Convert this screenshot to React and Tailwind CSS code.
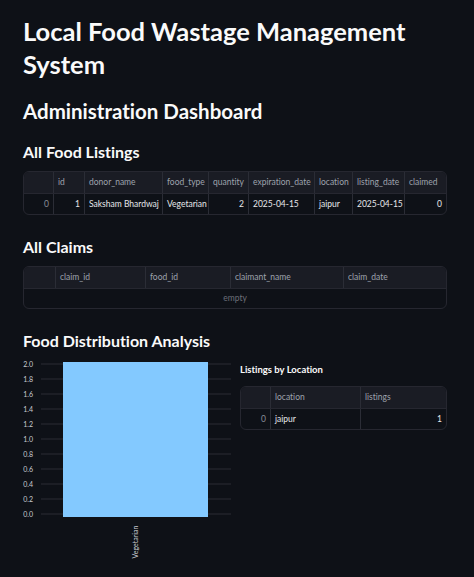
const listingCols = [
  { key: "idx", label: "", w: 30, align: "right" },
  { key: "id", label: "id", w: 31, align: "right" },
  { key: "donor_name", label: "donor_name", w: 78 },
  { key: "food_type", label: "food_type", w: 46 },
  { key: "quantity", label: "quantity", w: 40, align: "right" },
  { key: "expiration_date", label: "expiration_date", w: 66 },
  { key: "location", label: "location", w: 38 },
  { key: "listing_date", label: "listing_date", w: 52 },
  { key: "claimed", label: "claimed", w: 41, align: "right" },
];

const listingRows = [
  {
    idx: 0,
    id: 1,
    donor_name: "Saksham Bhardwaj",
    food_type: "Vegetarian",
    quantity: 2,
    expiration_date: "2025-04-15",
    location: "jaipur",
    listing_date: "2025-04-15",
    claimed: 0,
  },
];

const claimCols = [
  { key: "idx", label: "", w: 32 },
  { key: "claim_id", label: "claim_id", w: 90 },
  { key: "food_id", label: "food_id", w: 85 },
  { key: "claimant_name", label: "claimant_name", w: 113 },
  { key: "claim_date", label: "claim_date", w: 100 },
];

const locCols = [
  { key: "idx", label: "", w: 30, align: "right" },
  { key: "location", label: "location", w: 90 },
  { key: "listings", label: "listings", w: 85, align: "right" },
];

function DataTable({ cols, rows, empty }) {
  return (
    <div className="border border-[#262730] rounded-md overflow-hidden text-[8.5px]">
      <div className="flex bg-[#1a1c24] h-[21px] items-center text-[#9ea3ad]">
        {cols.map((c) => (
          <div
            key={c.key}
            style={{ width: c.w }}
            className="h-full flex items-center px-[4px] border-r border-[#2b2d36] last:border-r-0 shrink-0 whitespace-nowrap overflow-hidden"
          >
            {c.label}
          </div>
        ))}
      </div>
      {empty ? (
        <div className="h-[20px] flex items-center justify-center border-t border-[#262730] text-[#6b6f78]">
          empty
        </div>
      ) : (
        rows.map((r, i) => (
          <div key={i} className="flex h-[21px] items-center border-t border-[#262730] text-[#e6e7ea]">
            {cols.map((c) => (
              <div
                key={c.key}
                style={{ width: c.w }}
                className={
                  "h-full flex items-center px-[4px] border-r border-[#2b2d36] last:border-r-0 shrink-0 whitespace-nowrap overflow-hidden " +
                  (c.align === "right" ? "justify-end " : "") +
                  (c.key === "idx" ? "text-[#8a8e97]" : "")
                }
              >
                {r[c.key]}
              </div>
            ))}
          </div>
        ))
      )}
    </div>
  );
}

function BarChart() {
  const ticks = ["2.0", "1.8", "1.6", "1.4", "1.2", "1.0", "0.8", "0.6", "0.4", "0.2", "0.0"];
  return (
    <svg width="215" height="210" viewBox="0 0 215 210" className="block">
      {ticks.map((t, i) => {
        const y = 4 + i * 15;
        return (
          <g key={t}>
            <line x1="18" x2="208" y1={y} y2={y} stroke="#2a2d35" strokeWidth="1" />
            <text x="10" y={y + 2.5} fill="#c9cbd1" fontSize="7" fontFamily="Lato, sans-serif" textAnchor="end">
              {t}
            </text>
          </g>
        );
      })}
      <rect x="40" y="2" width="145" height="155" fill="#83c9ff" />
      <text
        x="0"
        y="0"
        transform="translate(115 182) rotate(-90)"
        fill="#c9cbd1"
        fontSize="7"
        fontFamily="Lato, sans-serif"
        textAnchor="middle"
      >
        Vegetarian
      </text>
    </svg>
  );
}

export default function App() {
  return (
    <div className="min-h-screen bg-[#0e1117] text-[#fafafa] px-[23px] pt-[15px] font-['Lato',sans-serif] [font-variant-ligatures:none]">
      <h1 className="text-[25.5px] font-bold leading-[33px]">
        Local Food Wastage Management System
      </h1>

      <h2 className="text-[20.5px] font-bold mt-[16px] leading-[28px]">
        Administration Dashboard
      </h2>

      <h3 className="text-[16px] font-bold mt-[16px] leading-[22px]">All Food Listings</h3>
      <div className="mt-[8px] w-[424px]">
        <DataTable cols={listingCols} rows={listingRows} />
      </div>

      <h3 className="text-[16px] font-bold mt-[21px] leading-[22px]">All Claims</h3>
      <div className="mt-[8px] w-[424px]">
        <DataTable cols={claimCols} rows={[]} empty />
      </div>

      <h3 className="text-[16px] font-bold mt-[21px] leading-[22px]">
        Food Distribution Analysis
      </h3>

      <div className="flex mt-[8px] gap-[10px]">
        <div className="w-[207px] shrink-0">
          <BarChart />
        </div>
        <div className="flex-1 pt-[3px]">
          <div className="text-[9.5px] font-bold leading-[14px]">Listings by Location</div>
          <div className="mt-[9px] w-[207px]">
            <DataTable
              cols={locCols}
              rows={[{ idx: 0, location: "jaipur", listings: 1 }]}
            />
          </div>
        </div>
      </div>
    </div>
  );
}
